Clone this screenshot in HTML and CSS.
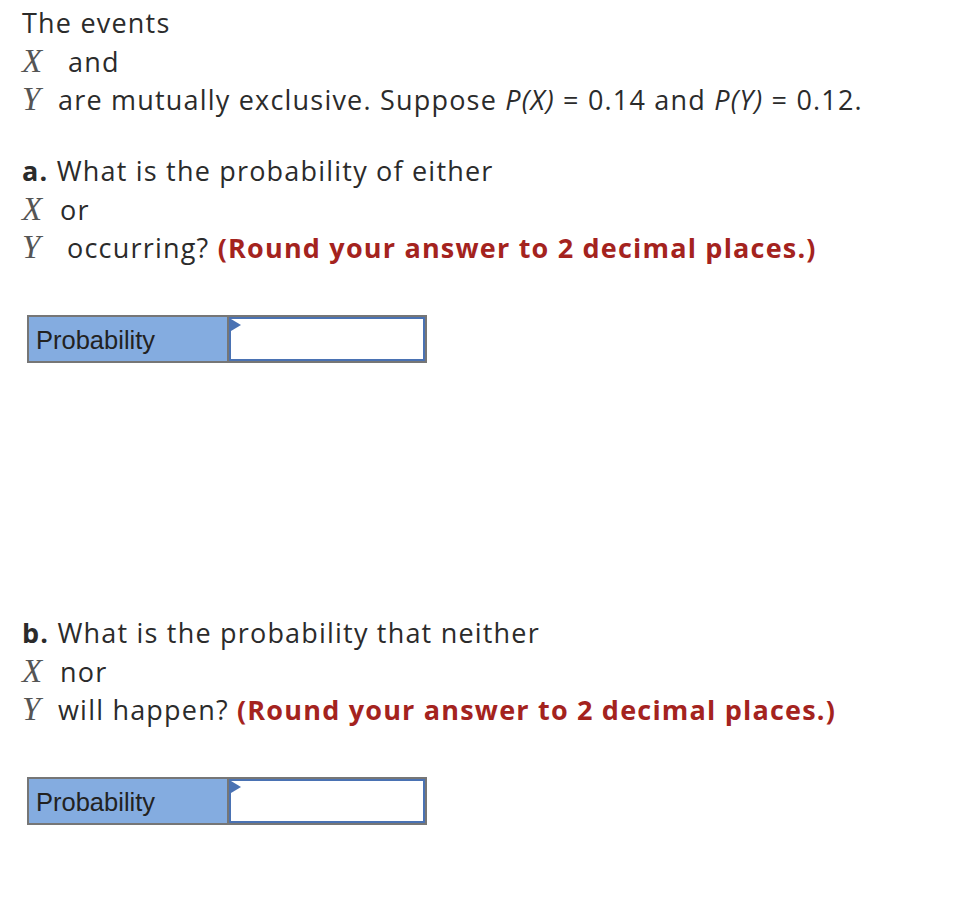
FILE: index.html
```html
<!DOCTYPE html>
<html>
<head>
<meta charset="utf-8">
<link rel="stylesheet" href="styles.css">
</head>
<body>
<div class="page">
  <div class="para intro">
    <div class="line">The events</div>
    <div class="line"><span class="mvar">X</span><span class="gap-lg">and</span></div>
    <div class="line"><span class="mvar">Y</span><span class="gap-sm">are mutually exclusive. Suppose <i>P(X)</i> = 0.14 and <i>P(Y)</i> = 0.12.</span></div>
  </div>

  <div class="para part">
    <div class="line"><b>a.</b> What is the probability of either</div>
    <div class="line"><span class="mvar">X</span><span class="gap-md">or</span></div>
    <div class="line"><span class="mvar">Y</span><span class="gap-lg2">occurring? <b class="hint">(Round your answer to 2 decimal places.)</b></span></div>
  </div>
  <div class="answer">
    <div class="label">Probability</div>
    <div class="field"><span class="marker"></span></div>
  </div>

  <div class="para part part-b">
    <div class="line"><b>b.</b> What is the probability that neither</div>
    <div class="line"><span class="mvar">X</span><span class="gap-md">nor</span></div>
    <div class="line"><span class="mvar">Y</span><span class="gap-sm">will happen? <b class="hint">(Round your answer to 2 decimal places.)</b></span></div>
  </div>
  <div class="answer">
    <div class="label">Probability</div>
    <div class="field"><span class="marker"></span></div>
  </div>
</div>
</body>
</html>
```

FILE: styles.css
```css
html, body {
  margin: 0;
  padding: 0;
  background: #ffffff;
}

.page {
  padding: 4px 0 0 22px;
  font-family: "Open Sans", "Noto Sans", sans-serif;
  font-size: 27px;
  letter-spacing: 1.2px;
  color: #2b2b2b;
}

.line {
  height: 38px;
  line-height: 38px;
  white-space: nowrap;
}

.line b {
  font-weight: 700;
}

.mvar {
  font-family: "Liberation Serif", "DejaVu Serif", serif;
  font-style: italic;
  font-size: 33px;
  letter-spacing: 0;
  color: #555555;
  display: inline-block;
  width: 26px;
}

.gap-lg {
  margin-left: 20px;
}

.gap-lg2 {
  margin-left: 19px;
}

.gap-md {
  margin-left: 12px;
}

.gap-sm {
  margin-left: 10px;
}

.hint {
  color: #a4231e;
}

.part {
  margin-top: 34px;
}

.part-b {
  margin-top: 251px;
}

.answer {
  margin-top: 49px;
  margin-left: 5px;
  width: 396px;
  height: 44px;
  border: 2px solid #767676;
  display: flex;
  font-family: "Liberation Sans", Arial, sans-serif;
  letter-spacing: 0;
}

.label {
  width: 200px;
  background: #84ace0;
  border-right: 2px solid #767676;
  font-size: 25.5px;
  line-height: 46px;
  padding-left: 7px;
  box-sizing: border-box;
  color: #222222;
}

.field {
  flex: 1;
  position: relative;
  border: 2px solid #4a72b3;
  background: #ffffff;
}

.marker {
  position: absolute;
  left: 0;
  top: 0;
  width: 0;
  height: 0;
  border-top: 6px solid transparent;
  border-bottom: 6px solid transparent;
  border-left: 10px solid #4a72b3;
}
```
